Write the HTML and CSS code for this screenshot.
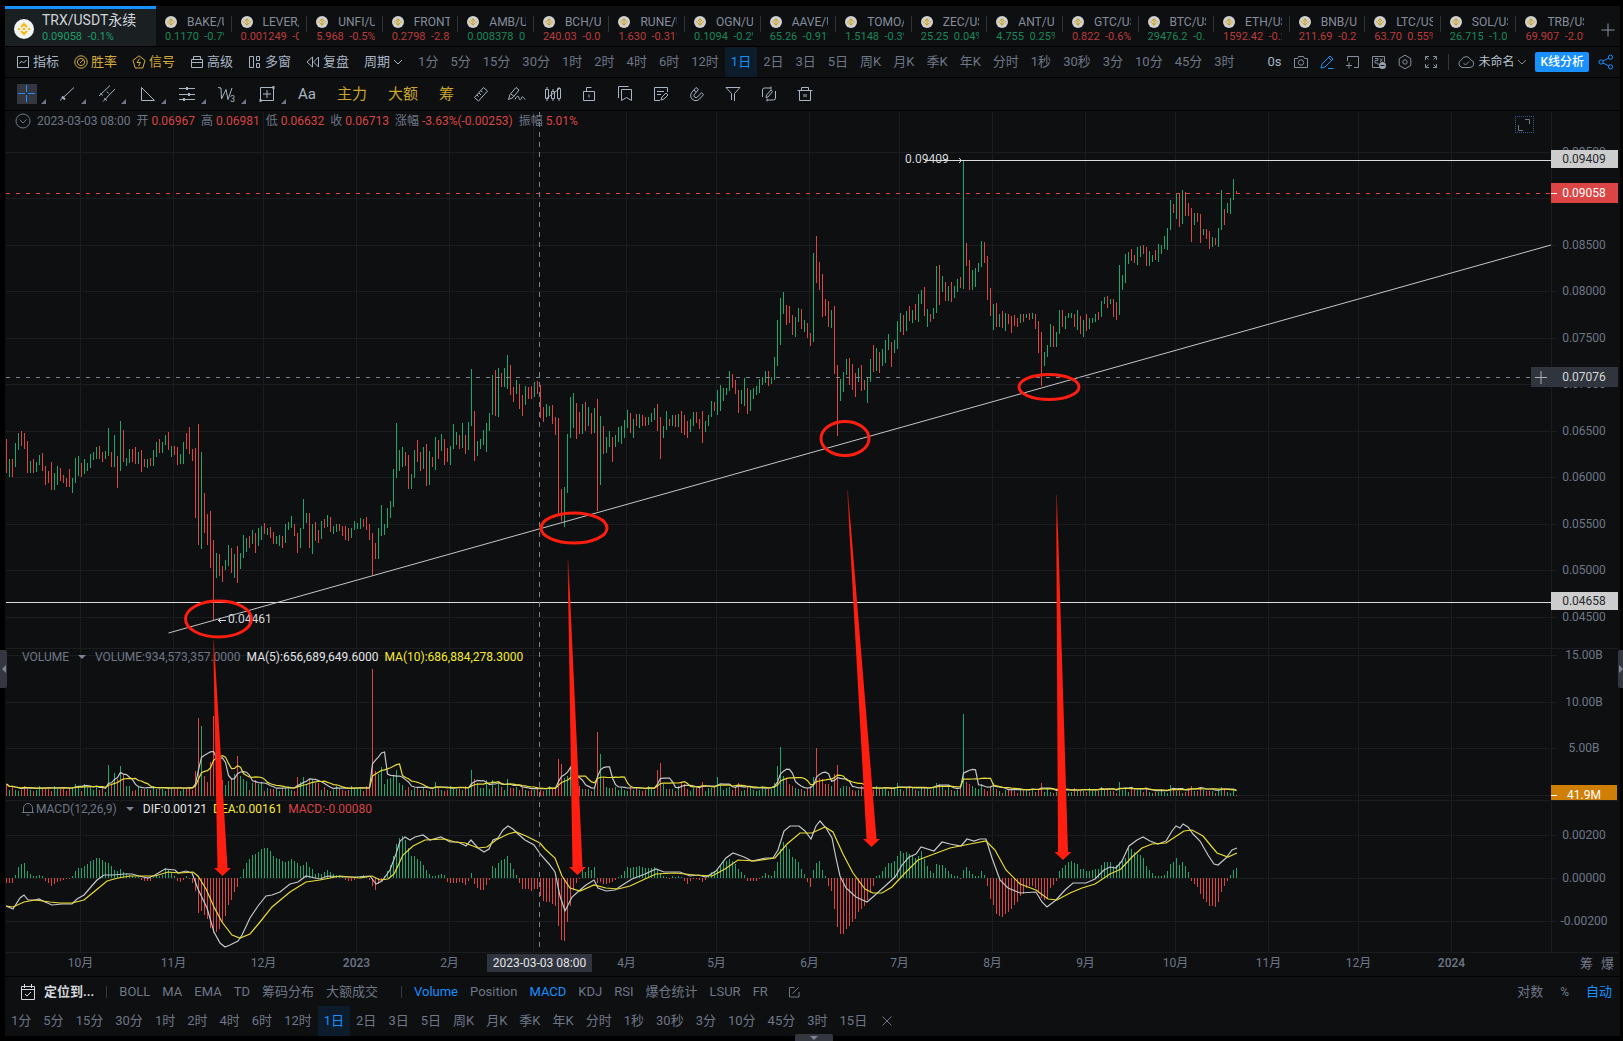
FILE: index.html
```html
<!DOCTYPE html>
<html lang="zh-CN">
<head>
<meta charset="utf-8">
<title>TRX/USDT永续</title>
<link rel="stylesheet" href="styles.css">
</head>
<body>
<svg class="sprite" aria-hidden="true">
  <symbol id="i-coin" viewBox="0 0 20 20"><circle cx="10" cy="10" r="10" fill="#f2f3f5"/><g fill="#f0b90b"><path d="M10 3.600l3.700 3.700-1.500 1.500L10 6.600 7.800 8.800 6.300 7.300z"/><path d="M10 16.400l3.700-3.700-1.500-1.500-2.200 2.200-2.200-2.200-1.500 1.500z"/><path d="M10 8.300l1.700 1.700-1.700 1.700L8.300 10z"/><path d="M5 8.500L6.500 10 5 11.500 3.500 10zM15 8.500l1.500 1.500-1.500 1.500-1.500-1.500z"/></g></symbol>
  <symbol id="i-ind" viewBox="0 0 14 14"><path d="M1.500 1.500h11v11h-11zM3.500 8.500l2-2.500 2 2 3-3"/></symbol>
  <symbol id="i-win" viewBox="0 0 14 14"><circle cx="7" cy="7" r="6.200"/><circle cx="7" cy="7" r="3.600"/><path d="M6 8l3-3"/></symbol>
  <symbol id="i-sig" viewBox="0 0 14 14"><path d="M7 .8l6 4.600-2.200 7.600H3.200L1 5.400z"/><path d="M7.600 3.500L5 7.500h3.500L6.500 11"/></symbol>
  <symbol id="i-adv" viewBox="0 0 14 14"><path d="M1.500 4.500h11v8h-11zM3.500 4.500v-3h7v3M1.500 7.500h11"/></symbol>
  <symbol id="i-multi" viewBox="0 0 14 14"><path d="M1.500 1.500h4v11h-4zM8.500 1.500h3v4h-3zM8.500 8.500h3v4h-3z"/></symbol>
  <symbol id="i-replay" viewBox="0 0 14 14"><path d="M6.500 2v10L1 7zM12.500 2v10L7.500 7z"/></symbol>
  <symbol id="i-down" viewBox="0 0 10 10"><path d="M1 3l4 4 4-4"/></symbol>
  <symbol id="i-camera" viewBox="0 0 16 16"><path d="M1.500 4.500h3l1-2h5l1 2h3v9h-13z"/><circle cx="8" cy="8.500" r="2.700"/></symbol>
  <symbol id="i-pen" viewBox="0 0 16 16"><path d="M2 14l1-4 8-8 3 3-8 8zM9.500 3.500l3 3M9 14.500h5.500"/></symbol>
  <symbol id="i-addbox" viewBox="0 0 16 16"><path d="M2.500 7V2.500h11v11H9M1 11.500h6M4 8.500v6"/></symbol>
  <symbol id="i-book" viewBox="0 0 16 16"><path d="M9 13.500H1.500v-11h12V8M4 4.500h3v2H4v2.500h3v2M9 4.500l2.500 3M11.500 4.500L9 8"/><circle cx="11.500" cy="11.500" r="3.500" fill="#9aa3b2" stroke="none"/><path d="M9.500 11.500h4" stroke="#0d0f11"/></symbol>
  <symbol id="i-hex" viewBox="0 0 16 16"><path d="M8 1.200l5.800 3.400v6.800L8 14.800l-5.800-3.400V4.600z"/><circle cx="8" cy="8" r="2.200"/></symbol>
  <symbol id="i-expand" viewBox="0 0 16 16"><path d="M2.500 6V2.500H6M10 2.500h3.500V6M13.500 10v3.500H10M6 13.500H2.500V10M2.500 2.500l3 3M13.500 2.500l-3 3M13.500 13.500l-3-3M2.500 13.500l3-3"/></symbol>
  <symbol id="i-cloud" viewBox="0 0 18 16"><path d="M5 13.500a4 4 0 0 1-.6-7.600A5 5 0 0 1 13.800 6 3.800 3.800 0 0 1 13 13.500zM6.500 9l2 2 3.500-3.500"/></symbol>
  <symbol id="i-share" viewBox="0 0 16 16"><circle cx="3" cy="8" r="2.100"/><circle cx="12.500" cy="3.200" r="2.100"/><circle cx="12.500" cy="12.800" r="2.100"/><path d="M5 7l5.600-2.800M5 9l5.600 2.800"/></symbol>
  <symbol id="i-cross" viewBox="0 0 20 20"><path d="M1 9.500h7M11 9.500h7M9.500 1v7M9.500 11v7"/></symbol>
  <symbol id="i-line" viewBox="0 0 20 20"><path d="M3 16.500L17 3.500"/><path d="M5 12.500l3 3" stroke-width="2"/></symbol>
  <symbol id="i-chan" viewBox="0 0 20 20"><path d="M2 12L13 1.500M6 17.500L18 5M3.500 9l2 2.500M7 14.500l3 2M10 7.500l1.500 2"/></symbol>
  <symbol id="i-tri" viewBox="0 0 20 20"><path d="M4.500 3.500v13h13z"/></symbol>
  <symbol id="i-fib" viewBox="0 0 20 20"><path d="M2 4.500h16M2 10.500h16M2 15.500h16"/><path d="M9 4.500h2M11 10.500h2M6 15.500h2" stroke-width="3"/></symbol>
  <symbol id="i-wave" viewBox="0 0 20 20"><path d="M1 3.500l3 .500.500 11L9 5.500l2 10L15 4"/><text x="13" y="18" font-size="9" fill="currentColor" stroke="none">3</text></symbol>
  <symbol id="i-shape" viewBox="0 0 20 20"><path d="M3.500 3.500h13v13h-13zM10 6v8M6 10h8"/><path d="M15.500 3.500h2M2.500 16.500h2" stroke-width="3"/></symbol>
  <symbol id="i-ruler" viewBox="0 0 16 16"><path d="M1.500 11.500l9-10 4 3.500-9 10zM4 9l1.500 1.500M6 7l2 2M8 4.800l1.500 1.500"/></symbol>
  <symbol id="i-draw" viewBox="0 0 18 16"><path d="M.5 13.500L2 8.500 8 1.500l3 2.500-6 7.500zM3 8l3 2.500M7 13.500c1.500-4 4-4 4-1.500s2 2 2.500 0 1.500-1.500 3.500 1.500"/></symbol>
  <symbol id="i-candles" viewBox="0 0 18 16"><path d="M1.500 3.500h3v9h-3zM7.500 5.500h3v7h-3zM13.500 2.500h3v10h-3zM3 1v2.500M3 12.500V15M9 3v2.500M9 12.500V15M15 1v1.500M15 12.500V15M3 12L15 3"/></symbol>
  <symbol id="i-lock" viewBox="0 0 16 16"><path d="M2.500 5.500h11v9h-11zM5.500 5.500v-4h5M8 8.500v3"/></symbol>
  <symbol id="i-mark" viewBox="0 0 16 16"><path d="M4.500 3.500h10v11l-5-3-5 3zM1.500 12V.500h10"/></symbol>
  <symbol id="i-note" viewBox="0 0 16 16"><path d="M7 14.500H1.500v-13h13V6M4 5.500h7M4 8.500h4M8 14l1-3 4-4 2 2-4 4z"/></symbol>
  <symbol id="i-magnet" viewBox="0 0 16 16"><path d="M7 1.500L3 6.200a4.800 4.800 0 0 0 7.500 6.800l4-4.300-2-2-4 4.300a2 2 0 0 1-3-2.800L9.500 3.500zM5 4l2.300 2"/></symbol>
  <symbol id="i-filter" viewBox="0 0 16 16"><path d="M1 1.500h14L9.500 7.500v7.500M1 1.500l5.500 6V14"/></symbol>
  <symbol id="i-sync" viewBox="0 0 16 16"><path d="M1.500 11V4a2 2 0 0 1 2-2H10M14.500 5v7a2 2 0 0 1-2 2H6M5 11.500l.500-2.500L10 4l1.500 1.500L7 11zM10 .5V3.500M6 12.500v3"/></symbol>
  <symbol id="i-trash" viewBox="0 0 16 16"><path d="M.5 4.500h15M2.500 4.500v10h11v-10M4.500 4.500v-3h7v3M7 8v3M9 8v3"/></symbol>
  <symbol id="i-cal" viewBox="0 0 16 16"><path d="M1.500 2.500h13v13h-13zM1.500 5.500h13M4.500 0v4M11.500 0v4M5 10l2 2 4-4"/></symbol>
  <symbol id="i-edit" viewBox="0 0 12 12"><path d="M6.500 1.500h-5v9.500h9.500V6M4.500 7.500L10.500 1.500"/></symbol>
  <symbol id="i-close" viewBox="0 0 12 12"><path d="M1.500 1.500l9 9M10.500 1.500l-9 9"/></symbol>
  <symbol id="i-bell" viewBox="0 0 14 14"><path d="M0 10.500h12M1.500 10.500V6a4.500 4.500 0 0 1 9 0v4.500M4.500 13h3"/></symbol>
  <symbol id="i-plus" viewBox="0 0 14 14"><path d="M7 .5v13M.5 7h13"/></symbol>
  <symbol id="i-full" viewBox="0 0 18 16"><path d="M10 2.500h4.500V7M3.500 8v5.500H8"/></symbol>
  <symbol id="i-round" viewBox="0 0 16 16"><circle cx="8" cy="8" r="7"/><path d="M4.500 6.500L8 10l3.500-3.500"/></symbol>
</svg>

<nav class="tabs" id="tabs">
  <button class="tab-main"><svg class="coin-l"><use href="#i-coin"/></svg><span class="tab-text"><span class="tab-title">TRX/USDT永续</span><span class="quote up">0.09058&nbsp; -0.1%</span></span></button>
  <button class="tab-add" aria-label="添加"><svg class="ic14"><use href="#i-plus"/></svg></button>
</nav>

<header class="bar">
  <button class="menu"><svg class="ic14"><use href="#i-ind"/></svg>指标</button>
  <button class="menu gold"><svg class="ic14"><use href="#i-win"/></svg>胜率</button>
  <button class="menu gold"><svg class="ic14"><use href="#i-sig"/></svg>信号</button>
  <button class="menu"><svg class="ic14"><use href="#i-adv"/></svg>高级</button>
  <button class="menu"><svg class="ic14"><use href="#i-multi"/></svg>多窗</button>
  <button class="menu"><svg class="ic14"><use href="#i-replay"/></svg>复盘</button>
  <button class="menu cycle">周期<svg class="ic10"><use href="#i-down"/></svg></button>
  <div class="periods" data-periods></div>
  <div class="bar-right">
    <span class="countdown">0s</span>
    <button aria-label="截图"><svg class="ic16"><use href="#i-camera"/></svg></button>
    <button class="on" aria-label="画线"><svg class="ic16"><use href="#i-pen"/></svg></button>
    <button aria-label="新增"><svg class="ic16"><use href="#i-addbox"/></svg></button>
    <button aria-label="弹窗"><svg class="ic16"><use href="#i-book"/></svg></button>
    <button aria-label="设置"><svg class="ic16"><use href="#i-hex"/></svg></button>
    <button aria-label="全屏"><svg class="ic16"><use href="#i-expand"/></svg></button>
    <span class="rule"></span>
    <button class="layout-name"><svg class="ic18"><use href="#i-cloud"/></svg>未命名<svg class="ic10"><use href="#i-down"/></svg></button>
    <button class="primary">K线分析</button>
    <button class="on" aria-label="分享"><svg class="ic16"><use href="#i-share"/></svg></button>
  </div>
</header>

<div class="bar tools">
  <button class="tool more active" aria-label="十字光标"><svg class="ic20"><use href="#i-cross"/></svg></button>
  <button class="tool more" aria-label="线段"><svg class="ic20"><use href="#i-line"/></svg></button>
  <button class="tool more" aria-label="通道"><svg class="ic20"><use href="#i-chan"/></svg></button>
  <button class="tool more" aria-label="三角形"><svg class="ic20"><use href="#i-tri"/></svg></button>
  <button class="tool more" aria-label="斐波那契"><svg class="ic20"><use href="#i-fib"/></svg></button>
  <button class="tool more" aria-label="波浪"><svg class="ic20"><use href="#i-wave"/></svg></button>
  <button class="tool more" aria-label="形状"><svg class="ic20"><use href="#i-shape"/></svg></button>
  <div class="words">
    <button class="tool word">Aa</button>
    <button class="tool word gold">主力</button>
    <button class="tool word gold">大额</button>
    <button class="tool word gold">筹</button>
  </div>
  <div class="tool-set">
    <button class="tool" aria-label="尺子"><svg class="ic16"><use href="#i-ruler"/></svg></button>
    <button class="tool" aria-label="画笔"><svg class="ic18"><use href="#i-draw"/></svg></button>
    <button class="tool" aria-label="K线"><svg class="ic18"><use href="#i-candles"/></svg></button>
    <button class="tool" aria-label="锁定"><svg class="ic16"><use href="#i-lock"/></svg></button>
    <button class="tool" aria-label="收藏"><svg class="ic16"><use href="#i-mark"/></svg></button>
    <button class="tool" aria-label="备注"><svg class="ic16"><use href="#i-note"/></svg></button>
    <button class="tool" aria-label="磁铁"><svg class="ic16"><use href="#i-magnet"/></svg></button>
    <button class="tool" aria-label="筛选"><svg class="ic16"><use href="#i-filter"/></svg></button>
    <button class="tool" aria-label="同步"><svg class="ic16"><use href="#i-sync"/></svg></button>
    <button class="tool" aria-label="删除"><svg class="ic16"><use href="#i-trash"/></svg></button>
  </div>
</div>

<main class="chart">
  <svg class="plot" id="plot"></svg>
  <section class="pane pane-price">
    <div class="legend">
      <svg class="ic16"><use href="#i-round"/></svg>
      <span>2023-03-03 08:00</span>
      <span>开 <b class="down">0.06967</b></span>
      <span>高 <b class="down">0.06981</b></span>
      <span>低 <b class="down">0.06632</b></span>
      <span>收 <b class="down">0.06713</b></span>
      <span>涨幅 <b class="down">-3.63%(-0.00253)</b></span>
      <span>振幅 <b class="down">5.01%</b></span>
    </div>
    <button class="full" aria-label="放大"><svg class="ic18"><use href="#i-full"/></svg></button>
  </section>
  <section class="pane pane-volume">
    <div class="legend"><span>VOLUME</span><i class="caret"></i><span>VOLUME:934,573,357.0000</span><span class="white">MA(5):656,689,649.6000</span><span class="yellow">MA(10):686,884,278.3000</span></div>
  </section>
  <section class="pane pane-macd">
    <div class="legend"><span class="named"><svg class="ic14"><use href="#i-bell"/></svg>MACD(12,26,9)</span><i class="caret"></i><span class="white">DIF:0.00121</span><span class="yellow">DEA:0.00161</span><span class="down">MACD:-0.00080</span></div>
  </section>
  <div class="axis-tools"><button>筹</button><button>爆</button></div>
  <svg class="plot marks" id="marks"></svg>
</main>

<footer class="foot">
  <div class="foot-row">
    <button class="locate"><svg class="ic16"><use href="#i-cal"/></svg>定位到...</button>
    <span class="rule"></span>
    <button>BOLL</button><button>MA</button><button>EMA</button><button>TD</button><button>筹码分布</button><button>大额成交</button>
    <span class="rule wide"></span>
    <button class="on">Volume</button><button>Position</button><button class="on">MACD</button><button>KDJ</button><button>RSI</button><button>爆仓统计</button><button>LSUR</button><button>FR</button>
    <button class="edit" aria-label="编辑"><svg class="ic12"><use href="#i-edit"/></svg></button>
    <div class="scale"><button>对数</button><button class="pct">%</button><button class="on">自动</button></div>
  </div>
  <div class="foot-row foot-periods">
    <div class="periods" data-periods="15日"></div>
    <button class="edit" aria-label="关闭"><svg class="ic12"><use href="#i-close"/></svg></button>
  </div>
</footer>
<button class="handle left" aria-label="展开左侧"></button>
<button class="handle right" aria-label="展开右侧"></button>
<button class="handle bottom" aria-label="展开底部"></button>
<script src="app.js"></script>
</body>
</html>
```
FILE: styles.css
```css
* { box-sizing: border-box; }
body {
  margin: 0; padding: 6px 3px 5px 5px; min-height: 100vh; position: relative;
  display: flex; flex-direction: column; gap: 1px; overflow: hidden;
  background: #000; color: #6f7787;
  font: 13px/16px Roboto, "Noto Sans CJK SC", sans-serif;
}
button { margin: 0; padding: 0; border: 0; background: none; color: inherit; font: inherit; white-space: nowrap; cursor: pointer; }
svg { display: block; flex: none; fill: none; stroke: currentColor; }
.sprite { position: absolute; width: 0; height: 0; }
.ic10 { width: 10px; height: 10px; }
.ic12 { width: 12px; height: 12px; }
.ic14 { width: 14px; height: 14px; }
.ic16 { width: 16px; height: 16px; }
.ic18 { width: 18px; height: 16px; }
.ic20 { width: 20px; height: 20px; }
.up { color: #1f9d68; }
.down { color: #d94444; }
.gold { color: #d3ab3c; }
.on { color: #1890ff; }
.rule { width: 1px; height: 14px; background: #33373f; }

.tabs { display: flex; height: 40px; background: #0d0f11; }
.tab-main { display: flex; align-items: center; gap: 8px; width: 151px; padding: 3px 0 0 9px; background: #1a1f22; border-top: 3px solid #1890ff; text-align: left; }
.tab-main .coin-l { width: 20px; height: 20px; stroke: none; }
.tab-text { display: flex; flex-direction: column; margin-top: -3px; }
.tab-title { font-size: 14px; line-height: 18px; color: #d0d4da; }
.quote { font-size: 11px; line-height: 14px; }
.tab-main .quote { line-height: 16px; }
.tab { flex: 1; min-width: 0; position: relative; padding: 5px 8px 0 9px; text-align: left; overflow: hidden; }
.tab::after { content: ""; position: absolute; right: 0; top: 10px; width: 1px; height: 16px; background: #2f3339; }
.tab:nth-last-child(2)::after { content: none; }
.tab-head { display: flex; align-items: center; gap: 10px; height: 16px; font-size: 12px; line-height: 16px; color: #858d9b; overflow: hidden; }
.tab-head svg { width: 12px; height: 12px; stroke: none; opacity: .85; }
.tab-name { overflow: hidden; }
.tab .quote { display: block; overflow: hidden; opacity: .85; }
.tab-add { width: 28px; display: grid; place-items: center; padding: 8px 0 0 4px; color: #8a92a0; }

.bar { display: flex; align-items: center; height: 30px; padding: 0 5px 0 11px; background: #0d0f11; color: #a9b4c4; }
.menu { display: flex; align-items: center; gap: 3px; margin-right: 15px; color: #a9b4c4; }
.menu.gold { color: #d3ab3c; }
.menu.cycle { margin-right: 5px; }
.periods { display: flex; align-self: stretch; color: #6f7787; }
.periods button { padding: 0 6px; }
.periods .on { color: #1890ff; background: #0c1c2a; }
.cycle + .periods { margin-left: 4px; }
.bar-right { display: flex; align-items: center; gap: 8px; margin-left: auto; color: #858d9b; }
.bar-right button { padding: 0 1px; }
.bar-right .on { color: #1890ff; }
.countdown { color: #a9b4c4; margin-right: 3px; }
.bar-right .rule { height: 16px; }
.bar-right .layout-name { display: flex; align-items: center; gap: 3px; padding: 0; font-size: 12px; color: #b9c2cf; }
.layout-name svg { color: #858d9b; }
.bar-right .primary { height: 20px; padding: 0 5px; border-radius: 2px; background: #1890ff; color: #fff; font-size: 12px; font-weight: 500; }

.tools { height: 32px; padding-left: 12px; }
.tool { display: grid; place-items: center; height: 20px; color: #a9b4c4; }
.more { width: 20px; margin-right: 20px; position: relative; }
.more::after { content: ""; position: absolute; left: 24px; bottom: 0; border-left: 5px solid transparent; border-bottom: 5px solid #6f7787; }
.tool.active { background: #34373f; color: #1890ff; }
.words { display: flex; gap: 21px; margin: 0 17px 0 1px; }
.word { font-size: 15px; }
.word.gold { color: #c9a52c; }
.tool-set { display: flex; gap: 16px; }
.tool-set .tool { width: 20px; }

.chart { position: relative; flex: 1 0 auto; display: grid; grid-template-rows: 537px 152px 152px minmax(24px, 1fr); background: #0d0f11; }
.plot { position: absolute; left: 0; top: 0; width: 100%; height: 100%; stroke: none; }
.marks { pointer-events: none; }
.plot text { font-size: 12px; }
.crisp { shape-rendering: crispEdges; }
.pane { position: relative; display: flex; justify-content: space-between; align-items: flex-start; padding: 2px 86px 0 10px; }
.legend { display: flex; align-items: center; gap: 6px; font-size: 12px; line-height: 16px; white-space: nowrap; }
.legend b { font-weight: 400; }
.pane-volume, .pane-macd { padding: 1px 86px 0 17px; }
.full { width: 19px; height: 17px; margin-top: 3px; border: 1px dotted #35588f; color: #6f7787; }
.full svg { margin: -1px; }
.named { display: flex; align-items: center; }
.caret { margin: 0 3px; border: 4px solid transparent; border-top-color: #7c8494; border-bottom: 0; }
.white { color: #e3e5e8; }
.yellow { color: #f8eb2f; }
.axis-tools { position: relative; display: flex; justify-content: flex-end; align-items: center; gap: 8px; padding-right: 6px; }

.foot { background: #0d0f11; }
.foot-row { display: flex; align-items: center; gap: 12px; height: 29px; padding: 0 8px 0 15px; }
.locate { display: flex; align-items: center; gap: 8px; font-weight: 700; color: #d5d8dc; }
.rule.wide { margin: 0 0 0 11px; }
.foot-row .rule { height: 12px; }
.edit { margin-left: 8px; }
.scale { display: flex; gap: 17px; margin-left: auto; }
.pct { font-size: 12px; }
.foot-periods { height: 30px; padding: 0; gap: 0; }

.handle { position: absolute; background: #34373f; }
.handle::after { content: ""; display: block; margin: auto; border: 4px solid transparent; }
.left, .right { top: 650px; height: 38px; }
.left { left: 0; width: 7px; border-radius: 0 2px 2px 0; }
.left::after { border-right-color: #7c8494; border-left: 0; width: 0; }
.right { right: 0; width: 5px; border-radius: 2px 0 0 2px; }
.right::after { border-left-color: #7c8494; border-right: 0; width: 0; }
.bottom { bottom: 0; left: 49%; width: 38px; height: 7px; border-radius: 2px 2px 0 0; }
.bottom::after { width: 0; border-top-color: #7c8494; border-bottom: 0; }
```
FILE: app.js
```js
const GREEN = '#1fa66d', RED = '#dc4545', GRID = '#1a1c1f', AXIS_TEXT = '#6f7787';

// Watch list: name, price, change, direction
const watch = [
  ['BAKE/USDT', '0.1170', '-0.7%', 1], ['LEVER/USDT', '0.001249', '-0.6%', 0], ['UNFI/USDT', '5.968', '-0.5%', 0],
  ['FRONT/USDT', '0.2798', '-2.8%', 0], ['AMB/USDT', '0.008378', '0.1%', 1], ['BCH/USDT', '240.03', '-0.0%', 0],
  ['RUNE/USDT', '1.630', '-0.31%', 0], ['OGN/USDT', '0.1094', '-0.2%', 1], ['AAVE/USDT', '65.26', '-0.91%', 1],
  ['TOMO/USDT', '1.5148', '-0.3%', 1], ['ZEC/USDT', '25.25', '0.04%', 1], ['ANT/USDT', '4.755', '0.25%', 1],
  ['GTC/USDT', '0.822', '-0.6%', 0], ['BTC/USDT', '29476.2', '-0.1%', 1], ['ETH/USDT', '1592.42', '-0.2%', 0],
  ['BNB/USDT', '211.69', '-0.2%', 0], ['LTC/USDT', '63.70', '0.55%', 0], ['SOL/USDT', '26.715', '-1.0%', 1],
  ['TRB/USDT', '69.907', '-2.0%', 0]
];
document.querySelector('.tab-add').insertAdjacentHTML('beforebegin', watch.map(([n, p, c, up]) =>
  `<button class="tab"><span class="tab-head"><svg><use href="#i-coin"/></svg><span class="tab-name">${n}</span></span><span class="quote ${up ? 'up' : 'down'}">${p}&nbsp; ${c}</span></button>`).join(''));

const periods = '1分 5分 15分 30分 1时 2时 4时 6时 12时 1日 2日 3日 5日 周K 月K 季K 年K 分时 1秒 30秒 3分 10分 45分 3时'.split(' ');
document.querySelectorAll('[data-periods]').forEach(el => {
  const list = el.dataset.periods ? periods.concat(el.dataset.periods) : periods;
  el.innerHTML = list.map(p => `<button${p === '1日' ? ' class="on"' : ''}>${p}</button>`).join('');
});

// Daily range: direction, high, low
const range = `r439,473 g459,477 r459,477 g443,467 g433,450 r431,446 r433,449 r441,473 g461,473 r459,473
g462,472 g455,465 r453,471 r466,485 r471,483 r462,490 g473,490 g466,485 r468,481 r475,483
r478,487 r469,487 g478,493 g458,483 g456,476 r463,477 g459,474 g463,471 g454,468 g452,460
g447,459 r446,459 r452,462 g451,459 g428,456 r452,467 g435,467 r456,488 g421,471 r430,462
g458,466 g449,463 r449,462 r447,464 g452,464 r450,472 r459,467 g459,468 r458,466 g450,466
g442,457 r439,453 g442,453 g435,445 r432,450 g446,457 r446,455 r447,465 g454,464 g442,464
r433,449 r427,454 r449,461 r448,518 r424,545 g452,549 r493,533 r514,545 r511,568 r540,620
g553,578 r554,576 r566,582 g560,570 g545,566 r548,573 g554,578 r546,583 g553,569 g535,558
g538,552 r536,548 g530,544 r533,553 g528,546 g526,540 r523,534 g528,535 r527,538 r532,544
g536,544 g535,546 r536,548 g524,543 g522,530 g516,528 r524,536 r533,553 g528,548 g499,529
g513,523 r513,548 g524,554 r522,541 r530,543 g521,539 r519,528 g515,527 r517,532 g526,534
g524,532 r524,531 r526,536 r526,540 r528,541 g528,538 g521,530 g523,529 g518,529 r519,527
r517,530 r524,540 r533,575 r543,559 g528,559 g505,536 g524,535 g508,528 g501,518 g469,507
g423,478 g450,471 g447,467 r452,466 r455,489 g474,489 g450,478 r440,462 r452,471 g447,469
r444,486 g451,485 r457,467 g437,470 r440,459 g434,451 r439,465 r448,462 g446,465 g424,449
g432,445 r435,449 g423,448 r435,454 g422,450 g369,426 r411,461 g441,456 g439,449 g430,445
g423,452 g413,431 g375,415 r370,416 g368,417 r373,387 g368,387 g355,389 r365,395 r387,402
g380,394 r384,409 r395,416 g386,405 r387,399 r386,399 g382,397 r381,394 r385,418 r407,422
g404,417 g406,416 r405,424 r417,435 r418,514 r489,521 g487,527 g434,493 g397,438 g393,428
r403,439 r412,434 g404,434 r402,431 g407,426 r413,434 g408,433 r399,511 g416,485 r426,454
g437,453 g431,447 r437,462 g435,447 g427,442 g426,444 g420,438 g410,428 r413,433 g419,438
r414,426 g414,428 r415,426 r417,426 g417,425 g413,422 g408,420 r404,431 r417,459 g426,438
g411,430 r419,426 g415,426 r415,427 g414,427 r411,433 r415,435 r421,438 g419,432 g412,426
r412,423 r419,429 r411,443 g421,432 g415,426 g401,417 r402,411 g390,415 g385,411 g388,401
g388,395 g371,391 r374,388 r380,394 r390,413 g390,404 g378,406 r388,414 g390,411 g388,399
g386,395 g379,393 g377,385 g371,383 r371,386 g377,384 g357,380 g320,366 g298,345 g292,314
r305,325 r306,323 r315,335 g317,337 g308,322 r309,329 g320,332 r323,338 r333,346 g253,342
r236,283 r262,290 r274,317 r299,316 r301,327 g310,328 r306,374 r365,436 g379,401 g372,392
g359,375 r358,385 r364,390 r373,397 g368,382 r365,391 r380,390 g378,403 g359,382 r345,372
g348,371 r352,373 g349,366 g340,363 g334,350 r342,367 g340,353 g321,349 g313,332 r315,335
g311,331 r306,321 g310,323 r304,320 g294,322 g290,304 r287,316 g309,327 r314,322 g308,319
g266,313 r265,305 g276,292 r282,301 g286,301 r282,302 g286,298 g279,292 r277,288 g160,289
r243,266 r260,290 g270,290 g268,287 g263,272 g241,267 r242,263 r256,300 r288,316 g304,330
r303,327 g314,327 r311,328 g313,331 r314,324 r316,333 r315,326 r318,327 g314,323 r314,322
g314,318 r313,320 g313,319 r314,329 r321,353 r332,386 g352,366 g345,357 g324,347 r326,347
g332,347 g310,334 r310,327 g316,329 g313,318 g313,318 r314,327 g310,330 r316,334 g320,337
r314,331 g318,329 g318,323 g314,322 r312,320 g301,317 g297,304 r296,308 g299,304 r299,317
r302,320 g265,315 g275,290 g254,283 g252,264 r249,261 r255,263 g247,265 g246,257 r245,254
r247,266 g251,266 g255,262 r250,260 g244,262 g245,254 g236,249 g228,250 g200,230 r204,213
g193,219 r193,227 g190,224 r192,216 r203,216 r208,242 g213,225 r213,222 r214,243 g229,235
r229,239 r231,249 g237,247 r238,245 g228,247 g190,230 r209,225 g203,213 g198,214 g179,200
r191,194`.split(/\s+/).map(s => [s[0] === 'g', ...s.slice(1).split(',').map(Number)]);

// Volume: quiet-day pattern plus the busy days
const quiet = [9, 7, 6, 8, 10, 6, 7, 5, 8, 7, 9, 5, 6];
const busy = {
  0: 11, 23: 12, 24: 10, 26: 12, 33: 4, 34: 31, 35: 12, 36: 23, 37: 17, 38: 30, 39: 22, 40: 10, 41: 10,
  63: 25, 64: 78, 65: 70, 66: 20, 67: 14, 68: 34, 69: 80, 70: 36, 71: 20, 72: 16, 73: 11, 74: 15, 75: 18, 76: 22,
  77: 40, 78: 20, 79: 17, 80: 15, 82: 13, 83: 16, 84: 12, 85: 14, 97: 19, 98: 14, 99: 19, 100: 12, 101: 17, 102: 17,
  103: 13, 104: 13, 122: 127, 123: 25, 124: 22, 125: 29, 126: 12, 127: 17, 128: 18, 129: 21, 130: 26, 131: 13, 132: 11,
  143: 14, 155: 26, 156: 17, 157: 13, 160: 16, 162: 16, 164: 14, 167: 17, 184: 37, 185: 32, 186: 18, 187: 20, 188: 30,
  189: 15, 190: 12, 191: 10, 197: 64, 198: 42, 199: 18, 200: 9, 217: 26, 218: 33, 219: 12, 225: 14, 226: 12, 232: 14,
  237: 19, 238: 12, 244: 13, 256: 13, 257: 30, 258: 49, 259: 20, 260: 17, 261: 12, 262: 10, 268: 10, 269: 19, 270: 48,
  271: 18, 272: 17, 273: 12, 274: 12, 275: 10, 276: 22, 277: 31, 278: 8, 279: 10, 280: 10, 297: 13, 310: 13, 311: 12,
  319: 82, 320: 14, 321: 12, 322: 10, 323: 8, 325: 12, 328: 10, 329: 13, 345: 13, 365: 9, 371: 14, 388: 11, 395: 10,
  398: 9, 405: 9, 410: 1
};
const volume = range.map((_, i) => busy[i] ?? Math.max(3, quiet[(i * 5 + (i >> 3)) % 13] - (i > 330 ? 2 : 0)));

const hist = `-5 -5 -5 3 11 14 15 7 4 2 2 3 2 -3 -5 -8 -6 -4 -3 -2 -1 -1 2 7 10 10 12 14 17 18 20 20 18 16 15 12 8 7 9 6
5 3 2 1 1 -2 -3 -3 -3 1 2 2 3 10 8 6 2 -3 -4 -2 2 -1 -5 -13 -35 -33 -37 -41 -50 -55 -54 -51 -45 -38 -27 -22 -14 -9 1 9
15 19 23 24 26 29 30 30 27 22 20 19 17 16 17 19 17 15 12 13 16 11 9 4 5 4 6 8 6 4 3 3 1 -2 -3 -3 -2 1 2 3
2 -2 -8 -12 -6 -3 2 7 13 22 34 40 42 38 30 22 22 19 17 13 8 4 2 2 3 4 3 -4 -5 -5 -5 -4 -5 -7 -3 5 -6 -10 -12 -12
-7 -2 12 10 15 18 19 22 15 9 3 -5 -11 -11 -11 -13 -11 -11 -18 -23 -24 -24 -26 -28 -48 -62 -63 -44 -28 -12 -5 -1 9 6 11 8 11 -5 -4 -6
-6 -5 -4 -2 1 3 7 11 10 11 11 12 11 10 10 10 11 8 5 2 1 -1 2 1 2 1 -3 -6 -3 -1 -1 -2 -4 -2 2 6 7 9 13 16
17 19 17 14 9 6 3 -3 -3 -3 -3 -1 2 5 3 2 7 16 29 36 32 29 21 19 16 9 4 -4 -9 8 15 17 8 2 -8 -13 -31 -49 -56 -56
-51 -48 -44 -41 -34 -31 -28 -22 -15 -8 2 3 7 11 15 15 17 22 27 25 26 24 23 20 22 27 19 12 7 5 14 13 13 10 7 4 2 2 -1 8
11 7 4 2 2 7 3 -8 -21 -27 -36 -38 -39 -36 -34 -31 -27 -24 -18 -16 -10 -8 -8 -10 -15 -20 -22 -21 -10 -7 -3 7 10 13 16 17 15 14 9 9
7 7 8 9 9 13 16 16 16 12 13 16 17 20 30 29 26 24 23 20 12 8 5 2 2 2 3 7 14 16 20 13 16 12 6 -3 -6 -9 -16 -21
-24 -28 -28 -29 -24 -14 -8 -3 3 8 10`.split(/\s+/).map(Number);

const dif = '6,906 13,909 20,898 24,895 28,900 35,900 39,899 45,902 52,905 62,904 72,904 77,899 84,895 90,888 97,880 104,875 113,875 125,874 132,874 139,876 148,878 155,875 165,869 175,870 178,873 186,871 192,873 198,889 207,908 214,932 220,943 225,947 230,945 238,941 242,935 250,918 258,906 266,896 272,895 280,892 290,884 298,882 306,876 315,878 320,879 328,876 345,877 357,877 370,876 376,884 382,881 390,870 396,854 400,841 405,837 410,840 415,837 423,835 430,840 441,837 450,842 458,842 466,846 471,840 478,848 484,852 489,849 493,840 498,838 503,830 508,826 513,829 518,834 525,840 534,845 541,855 549,864 555,872 560,896 565,911 572,897 580,890 586,885 594,880 598,888 606,891 615,890 624,884 632,879 645,874 656,869 664,872 680,872 690,876 698,875 706,877 716,871 726,858 733,853 744,857 752,861 766,858 773,858 778,850 784,831 790,826 799,826 805,831 811,839 816,826 820,821 826,828 832,838 836,858 840,876 846,888 856,897 867,902 874,896 884,887 895,877 902,865 909,857 916,854 921,847 934,851 942,842 950,844 961,846 967,839 974,841 980,839 986,839 992,858 1000,880 1008,888 1020,893 1036,892 1042,902 1047,907 1056,900 1065,890 1073,883 1086,883 1095,879 1104,870 1110,867 1116,868 1122,861 1129,846 1137,840 1143,837 1150,841 1158,844 1166,841 1172,831 1176,826 1180,828 1183,824 1188,827 1193,834 1200,841 1208,855 1214,864 1218,865 1226,858 1232,850 1237,848';
const dea = '6,906 13,907 24,902 35,900 50,902 60,903 72,903 84,900 95,891 107,881 118,878 130,876 145,876 155,876 168,872 180,873 193,872 198,876 206,889 214,907 222,922 232,935 240,938 250,934 260,922 272,907 290,892 306,882 320,880 340,876 360,878 372,876 380,880 388,879 394,874 403,855 413,846 425,840 445,839 455,842 465,843 478,848 487,847 496,840 508,834 516,832 526,836 540,843 545,849 555,858 562,876 570,888 580,891 594,885 606,888 618,889 630,886 645,879 656,874 675,873 695,875 712,876 725,869 738,860 755,861 775,858 787,844 800,833 812,833 825,827 833,832 843,854 853,873 865,889 873,893 882,893 892,887 905,873 918,860 934,854 950,848 970,844 986,841 995,850 1006,870 1020,884 1036,890 1048,899 1057,900 1070,893 1082,888 1095,884 1110,874 1121,869 1132,857 1142,848 1152,844 1166,843 1175,837 1184,831 1192,830 1203,836 1212,847 1217,853 1228,857 1237,853';

const months = [[80, '10月'], [173, '11月'], [263, '12月'], [356, '2023'], [449, '2月'], [533, ''], [626, '4月'], [716, '5月'], [809, '6月'], [899, '7月'], [992, '8月'], [1085, '9月'], [1175, '10月'], [1268, '11月'], [1358, '12月'], [1451, '2024']];
// The labels at 0.095 and 0.07 lie partly under a price badge
const ticks = [[152, '0.09500'], [198, ''], [245, '0.08500'], [291, '0.08000'], [338, '0.07500'], [384, '0.07000'], [431, '0.06500'], [477, '0.06000'], [524, '0.05500'], [570, '0.05000'], [617, '0.04500'],
  [655, '15.00B'], [702, '10.00B'], [748, '5.00B'], [795, ''], [835, '0.00200'], [878, '0.00000'], [921, '-0.00200']];

const line = (x1, y1, x2, y2, c, extra = '') => `<line x1="${x1}" y1="${y1}" x2="${x2}" y2="${y2}" stroke="${c}" ${extra}/>`;
const rect = (x, y, w, h, c) => `<rect x="${x}" y="${y}" width="${w}" height="${h}" fill="${c}"/>`;
const text = (x, y, s, c, extra = '') => `<text x="${x}" y="${y}" fill="${c}" ${extra}>${s}</text>`;
const average = n => volume.map((_, i) => {
  const part = volume.slice(Math.max(0, i - n + 1), i + 1);
  return `${6.5 + 3 * i},${(795 - part.reduce((a, b) => a + b) / part.length).toFixed(1)}`;
}).join(' ');
const curve = (pts, c) => `<polyline points="${pts}" fill="none" stroke="${c}" stroke-width="1.2"/>`;
const MID = 'text-anchor="middle"';

function draw() {
  const plot = document.getElementById('plot');
  const edge = plot.getBoundingClientRect().width + 5 - 69;   // left side of the price axis
  const mid = edge + 33;
  let s = '<g transform="translate(-5 -111)"><g class="crisp">';
  months.forEach(([x]) => { s += rect(x, 112, 1, 840, GRID); });
  ticks.forEach(([y]) => { s += rect(6, y, edge, 1, GRID); });
  s += rect(edge + 6, 112, 80, 840, '#0d0f11') + rect(edge, 112, 1, 840, GRID);
  [648, 800, 952].forEach(y => { s += rect(6, y, edge + 61, 1, GRID); });
  range.forEach(([up, hi, lo], i) => {
    const c = up ? GREEN : RED, x = 6 + 3 * i;
    s += rect(x, hi, 1, lo - hi, c) + rect(x, 796 - volume[i], 1, volume[i], c);
  });
  hist.forEach((h, i) => { s += rect(6 + 3 * i, h > 0 ? 878 - h : 878, 1, Math.abs(h), h > 0 ? GREEN : RED); });
  s += '</g>' + curve(average(5), '#c4c6c9') + curve(average(10), '#e8db35') + curve(dif, '#c4c6c9') + curve(dea, '#e8db35');
  s += text(905, 163, '0.09409', '#d5d8dc') + text(228, 623, '0.04461', '#d5d8dc');
  s += '<path d="M956 160.500h5M959 158l2.500 2.500-2.500 2.500M226 620.500h-8M221 618l-2.500 2.500 2.500 2.500" fill="none" stroke="#d5d8dc"/>';
  s += line(925, 160.5, edge, 160.5, '#dcdcdc') + line(6, 602.5, edge, 602.5, '#dcdcdc') + line(168.5, 633, edge, 245, '#c4c6c9');
  s += line(6, 193.5, edge, 193.5, RED, 'stroke-dasharray="4 6"') + line(6, 377.5, edge, 377.5, '#7c8290', 'stroke-dasharray="4 6"');
  s += line(539.5, 112, 539.5, 952, '#7c8290', 'stroke-dasharray="5 5"');

  months.forEach(([x, t]) => { s += text(x + .5, 967, t, AXIS_TEXT, MID + (t.length === 4 ? ' font-weight="500"' : '')); });
  ticks.forEach(([y, t]) => { s += text(mid, y + 4, t, AXIS_TEXT, MID); });
  const badge = (y, h, t, bg, fg) => { s += rect(edge, y, 67, h, bg) + text(mid, y + h / 2 + 4, t, fg, MID); };
  badge(150, 18, '0.09409', '#cdcdcd', '#26282c');
  badge(592, 18, '0.04658', '#cdcdcd', '#26282c');
  badge(183, 20, '0.09058', '#dc4545', '#fff');
  badge(367, 20, '0.07076', '#30343d', '#d5d8dc');
  s += rect(edge, 785, 66, 15, '#cf7f05') + text(mid, 799, '41.9M', '#fff', MID);
  s += rect(edge, 193, 6, 1, '#fff') + rect(edge, 795, 6, 1, '#fff');
  s += rect(edge - 20, 367, 20, 20, '#30343d') + `<path d="M${edge - 16} 377.500h12M${edge - 10} 371v13" stroke="#a9b0bc" fill="none"/>`;
  s += rect(487, 954, 105, 18, '#30343d') + text(539.5, 967, '2023-03-03 08:00', '#e3e5e8', MID);
  plot.innerHTML = s + '</g>';

  // Hand-drawn annotations: circled lows and the arrows below them
  let m = '<defs><linearGradient id="fade" x1="0" y1="0" x2="0" y2="1"><stop offset="0" stop-color="#ff1e10" stop-opacity=".4"/><stop offset=".1" stop-color="#ff1e10"/></linearGradient></defs><g transform="translate(-5 -111)">';
  [[218.5, 619, 33, 18], [574, 528, 33, 15], [845, 438.5, 24, 17], [1049, 387, 30, 12.5]].forEach(([x, y, a, b]) => {
    m += `<ellipse cx="${x}" cy="${y}" rx="${a}" ry="${b}" fill="none" stroke="#ff1e10" stroke-width="3"/>`;
  });
  [[213.5, 640, 222.5, 876], [568, 560, 577.5, 875], [847.5, 490, 871.5, 847], [1056.5, 495, 1063, 860]].forEach(([x, y, tx, ty]) => {
    m += `<path d="M${x - .4} ${y}h.8L${tx + 5} ${ty - 8}h3.500L${tx} ${ty}l-8.500-8h3.500z" fill="url(#fade)"/>`;
  });
  document.getElementById('marks').innerHTML = m + '</g>';
}
draw();
addEventListener('resize', draw);
```
